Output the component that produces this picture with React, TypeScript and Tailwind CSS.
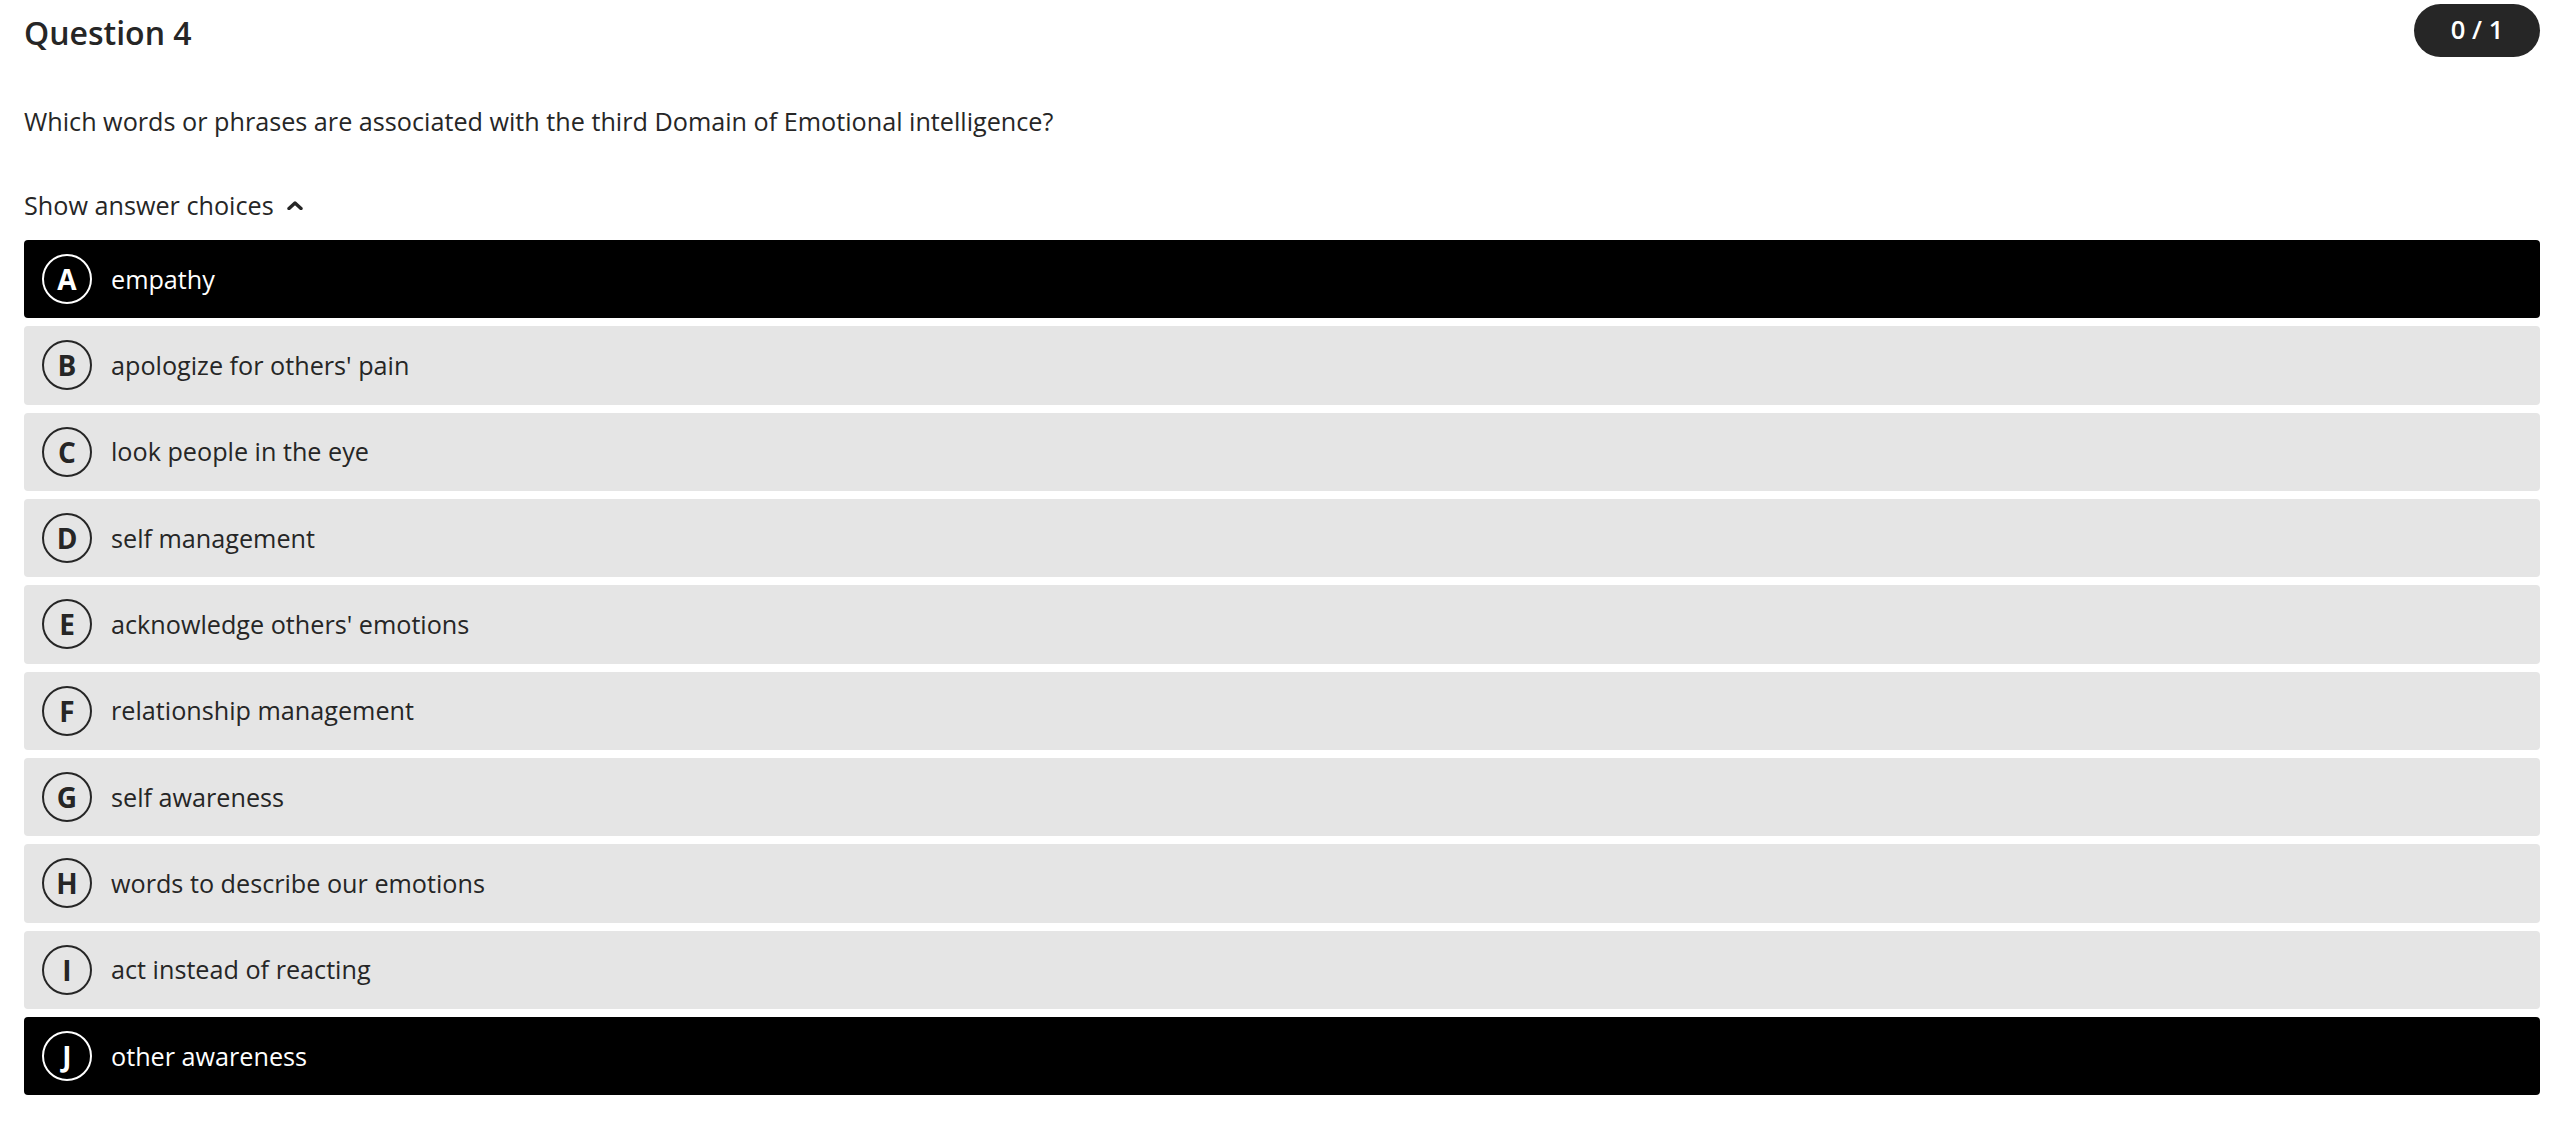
import { useState } from "react";

const choices = [
  { letter: "A", text: "empathy", selected: true },
  { letter: "B", text: "apologize for others' pain", selected: false },
  { letter: "C", text: "look people in the eye", selected: false },
  { letter: "D", text: "self management", selected: false },
  { letter: "E", text: "acknowledge others' emotions", selected: false },
  { letter: "F", text: "relationship management", selected: false },
  { letter: "G", text: "self awareness", selected: false },
  { letter: "H", text: "words to describe our emotions", selected: false },
  { letter: "I", text: "act instead of reacting", selected: false },
  { letter: "J", text: "other awareness", selected: true },
];

const ChevronUp = () => (
  <svg width="16" height="9" viewBox="0 0 16 9" fill="none" className="shrink-0">
    <path d="M2 7.5 L8 2 L14 7.5" stroke="#262626" strokeWidth="3.4" strokeLinecap="round" strokeLinejoin="round" />
  </svg>
);

export default function App() {
  const [open, setOpen] = useState(true);

  return (
    <div
      className="min-h-screen bg-white pl-[24px] pr-[28px] pt-[4px] text-[#262626]"
      style={{ fontFamily: '"Open Sans", "Noto Sans", sans-serif' }}
    >
      <div className="flex items-start justify-between">
        <h2 className="mt-[6.8px] text-[32px] font-semibold leading-[44px]">Question 4</h2>
        <div className="flex h-[53px] w-[126px] items-center justify-center rounded-full bg-[#262626] text-[25.6px] font-semibold text-white">
          0 / 1
        </div>
      </div>

      <p className="mt-[46.6px] text-[25.2px] leading-[35px]">
        Which words or phrases are associated with the third Domain of Emotional intelligence?
      </p>

      <button
        className="mt-[49px] flex items-center gap-[13px] text-[25.2px] leading-[35px]"
        onClick={() => setOpen(!open)}
      >
        <span>Show answer choices</span>
        <ChevronUp />
      </button>

      {open && (
        <div className="mt-[17.4px] flex flex-col gap-[8px]">
          {choices.map((c) => (
            <div
              key={c.letter}
              className={
                c.selected
                  ? "flex h-[78.33px] items-center rounded-[4px] bg-black pl-[18px] text-white"
                  : "flex h-[78.33px] items-center rounded-[4px] bg-[#e5e5e5] pl-[18px] text-[#262626]"
              }
            >
              <div
                className={
                  c.selected
                    ? "flex h-[50px] w-[50px] shrink-0 items-center justify-center rounded-full border-[2.5px] border-white text-[28px] font-bold leading-none"
                    : "flex h-[50px] w-[50px] shrink-0 items-center justify-center rounded-full border-[2.5px] border-[#262626] text-[28px] font-bold leading-none"
                }
              >
                {c.letter}
              </div>
              <span className="ml-[19px] text-[25.2px] leading-[35px]">{c.text}</span>
            </div>
          ))}
        </div>
      )}
    </div>
  );
}
